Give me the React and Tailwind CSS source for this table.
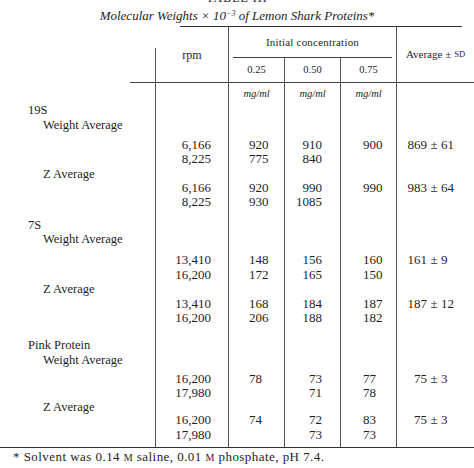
import React from 'react';

const cols = 'grid grid-cols-[155px_73px_56px_56px_56px_78px]';
const vline = 'border-l border-[#555]';

const rows = [
    { h: 'h-[16px]', label: '19S' },
    { h: 'h-[15px]', label: 'Weight Average', sub: true },
    { h: 'h-[20px]', rpm: '6,166', c1: '920', c2: '910', c3: '900', avg: ['869', '61'] },
    { h: 'h-[14px]', rpm: '8,225', c1: '775', c2: '840' },
    { h: 'h-[15px]', label: 'Z Average', sub: true },
    { h: 'h-[14px]', rpm: '6,166', c1: '920', c2: '990', c3: '990', avg: ['983', '64'] },
    { h: 'h-[13px]', rpm: '8,225', c1: '930', c2: '1085' },
    { h: 'h-[24px]', label: '7S' },
    { h: 'h-[14px]', label: 'Weight Average', sub: true },
    { h: 'h-[21px]', rpm: '13,410', c1: '148', c2: '156', c3: '160', avg: ['161', '9'] },
    { h: 'h-[15px]', rpm: '16,200', c1: '172', c2: '165', c3: '150' },
    { h: 'h-[13px]', label: 'Z Average', sub: true },
    { h: 'h-[16px]', rpm: '13,410', c1: '168', c2: '184', c3: '187', avg: ['187', '12'] },
    { h: 'h-[14px]', rpm: '16,200', c1: '206', c2: '188', c3: '182' },
    { h: 'h-[27px]', label: 'Pink Protein' },
    { h: 'h-[15px]', label: 'Weight Average', sub: true },
    { h: 'h-[19px]', rpm: '16,200', c1: '78', c2: '73', c3: '77', avg: ['75', '3'] },
    { h: 'h-[14px]', rpm: '17,980', c2: '71', c3: '78' },
    { h: 'h-[12px]', label: 'Z Average', sub: true },
    { h: 'h-[15px]', rpm: '16,200', c1: '74', c2: '72', c3: '83', avg: ['75', '3'] },
    { h: 'h-[15px]', rpm: '17,980', c2: '73', c3: '73' },
];

function Row({ row }) {
    const cell = 'flex items-end';
    const txt = 'h-[14px] leading-[14px] whitespace-nowrap';
    return (
        <div className={`${cols} ${row.h}`}>
            <div className={`${cell} ${row.sub ? 'pl-[43px]' : 'pl-[28px]'}`}>
                {row.label && <span className={`${txt} text-[12.5px]`}>{row.label}</span>}
            </div>
            <div className={`${cell} ${vline} justify-end pr-[17px]`}>
                {row.rpm && <span className={txt}>{row.rpm}</span>}
            </div>
            <div className={`${cell} ${vline} pl-[20px]`}>
                {row.c1 && <span className={txt}>{row.c1}</span>}
            </div>
            <div className={`${cell} ${vline} justify-end pr-[18px]`}>
                {row.c2 && <span className={txt}>{row.c2}</span>}
            </div>
            <div className={`${cell} ${vline} pl-[22px]`}>
                {row.c3 && <span className={txt}>{row.c3}</span>}
            </div>
            <div className={`${cell} ${vline}`}>
                {row.avg && (
                    <div className={`${txt} flex`}>
                        <span className="w-[30px] text-right">{row.avg[0]}</span>
                        <span className="w-[14px] text-center">±</span>
                        <span>{row.avg[1]}</span>
                    </div>
                )}
            </div>
        </div>
    );
}

export default function App() {
    return (
        <div className="w-[474px] h-[468px] overflow-hidden bg-white text-[#1e1e1e] text-[13px] font-['Liberation_Serif',serif]">
            {/* caption */}
            <div className="-mt-[8px] h-[12px] leading-[12px] text-center text-[12px] tracking-[1px]">TABLE III</div>
            <div className="mt-[5px] h-[14px] leading-[14px] text-center italic text-[13px]">
                Molecular Weights × 10<sup className="text-[8px]">−3</sup> of Lemon Shark Proteins*
            </div>

            <div className="mt-[3px] ml-[180px] mr-[12px] h-px bg-[#333]" />

            {/* column heads */}
            <div className={`${cols} h-[55px]`}>
                <div />
                <div className="flex flex-col">
                    <div className="h-[21px]" />
                    <div className={`flex-1 ${vline}`}>
                        <div className="h-[14px] leading-[14px] text-center text-[12px]">rpm</div>
                    </div>
                </div>
                <div className={`col-span-3 flex flex-col ${vline}`}>
                    <div className="h-[30px] flex items-center justify-center text-[11px] tracking-[0.2px]">
                        Initial concentration
                    </div>
                    <div className="mx-[4px] h-px bg-[#444]" />
                    <div className="flex-1 grid grid-cols-[55px_56px_56px] text-[10.5px]">
                        <div className="flex items-center justify-center">0.25</div>
                        <div className={`flex items-center justify-center ${vline}`}>0.50</div>
                        <div className={`flex items-center justify-center ${vline}`}>0.75</div>
                    </div>
                </div>
                <div className={`flex items-center justify-center text-[11px] ${vline}`}>
                    Average ± <span className="ml-[3px] text-[8.5px]">SD</span>
                </div>
            </div>

            <div className="ml-[130px] h-px bg-[#444]" />

            {/* units */}
            <div className={`${cols} h-[18px]`}>
                <div />
                <div className={vline} />
                <div className={`flex items-end justify-center italic text-[10.5px] leading-[14px] ${vline}`}>mg/ml</div>
                <div className={`flex items-end justify-center italic text-[10.5px] leading-[14px] ${vline}`}>mg/ml</div>
                <div className={`flex items-end justify-center italic text-[10.5px] leading-[14px] ${vline}`}>mg/ml</div>
                <div className={vline} />
            </div>

            {rows.map((row, i) => (
                <Row key={i} row={row} />
            ))}

            <div className={`${cols} h-[5px]`}>
                <div />
                <div className={vline} />
                <div className={vline} />
                <div className={vline} />
                <div className={vline} />
                <div className={vline} />
            </div>

            <div className="h-px bg-[#333]" />

            <div className="mt-[2px] pl-[13px] h-[14px] leading-[14px] text-[13px] tracking-[0.45px] whitespace-nowrap">
                * Solvent was 0.14 <span className="text-[10px]">M</span> saline, 0.01 <span className="text-[10px]">M</span> phosphate, pH 7.4.
            </div>
        </div>
    );
}
